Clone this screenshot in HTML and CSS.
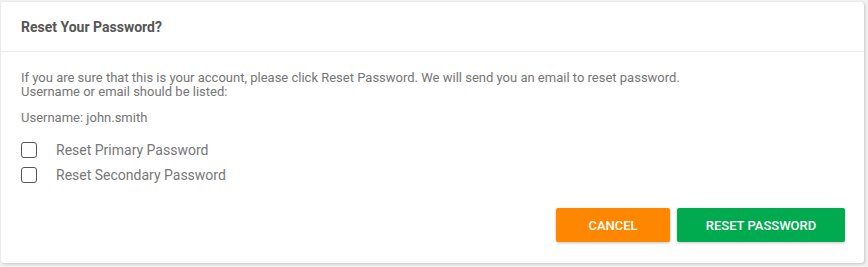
FILE: index.html
```html
<!DOCTYPE html>
<html lang="en">
<head>
  <meta charset="UTF-8" />
  <title>Reset Your Password</title>
  <link rel="stylesheet" href="styles.css">
</head>
<body>
  <div class="reset-card">
    <!-- intestazione -->
    <div class="reset-header">Reset Your Password?</div>
    <!-- corpo -->
    <div class="reset-body">
      <p class="reset-info">If you are sure that this is your account, please click Reset Password. We will send you an email to reset password.<br>Username or email should be listed:</p>
      <p class="reset-user">Username: john.smith</p>
      <label class="reset-option"><span class="check-box"></span>Reset Primary Password</label>
      <label class="reset-option"><span class="check-box"></span>Reset Secondary Password</label>
    </div>
    <!-- pulsanti -->
    <div class="reset-actions">
      <button class="btn btn-cancel">Cancel</button>
      <button class="btn btn-reset">Reset Password</button>
    </div>
  </div>
</body>
</html>
```

FILE: styles.css
```css
/* ---------- RESET ---------- */
* {
  margin: 0;
  padding: 0;
  box-sizing: border-box;
}
body {
  font-family: Roboto, "Liberation Sans", Arial, sans-serif;
  background: #f1f1f1;
  color: #757575;
  width: 868px;
  height: 267px;
  overflow: hidden;
}
/* ---------- CARD ---------- */
.reset-card {
  margin: 2px 4px 0 1px;
  height: 261px;
  background: #fff;
  border-radius: 3px;
  box-shadow: 1px 1px 3px rgba(0, 0, 0, 0.18);
  display: flex;
  flex-direction: column;
}
.reset-header {
  height: 50px;
  padding: 0 20px;
  display: flex;
  align-items: center;
  border-bottom: 1px solid #e9e9e9;
  font-size: 14px;
  font-weight: bold;
  color: #555;
}
.reset-body {
  padding: 19px 20px 0;
  font-size: 13px;
  flex: 1;
}
.reset-info {
  line-height: 14px;
}
.reset-user {
  margin-top: 12px;
  line-height: 14px;
}
.reset-option {
  display: flex;
  align-items: center;
  height: 25px;
  font-size: 14px;
  color: #777;
}
.reset-user + .reset-option {
  margin-top: 12px;
}
.check-box {
  width: 16px;
  height: 16px;
  border: 1.5px solid #555;
  border-radius: 3px;
  margin-right: 19px;
}
/* ---------- PULSANTI ---------- */
.reset-actions {
  display: flex;
  justify-content: flex-end;
  gap: 7px;
  padding: 0 19px 21px 0;
}
.btn {
  height: 34px;
  border: none;
  border-radius: 2px;
  color: #fff;
  font-family: Roboto, "Liberation Sans", Arial, sans-serif;
  font-size: 13px;
  font-weight: 500;
  text-transform: uppercase;
  box-shadow: 0 1px 3px rgba(0, 0, 0, 0.25);
  cursor: pointer;
}
.btn-cancel {
  width: 114px;
  background: #ff8700;
}
.btn-reset {
  width: 168px;
  background: #00aa4e;
}
```
